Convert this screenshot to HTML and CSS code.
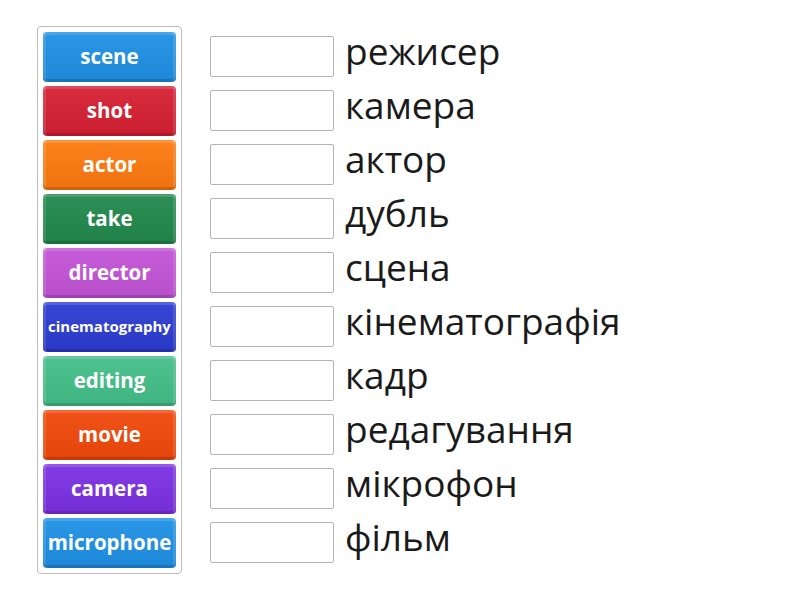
FILE: index.html
```html
<!DOCTYPE html>
<html>
<head>
<meta charset="utf-8">
<link rel="stylesheet" href="styles.css">
</head>
<body>
<div class="page">
  <div class="bank">
    <div class="tile c-blue">scene</div>
    <div class="tile c-red">shot</div>
    <div class="tile c-orange">actor</div>
    <div class="tile c-green">take</div>
    <div class="tile c-pink">director</div>
    <div class="tile c-indigo small">cinematography</div>
    <div class="tile c-mint">editing</div>
    <div class="tile c-vermilion">movie</div>
    <div class="tile c-purple">camera</div>
    <div class="tile c-blue">microphone</div>
  </div>
  <div class="rows">
    <div class="row"><div class="slot"></div><span class="word">режисер</span></div>
    <div class="row"><div class="slot"></div><span class="word">камера</span></div>
    <div class="row"><div class="slot"></div><span class="word">актор</span></div>
    <div class="row"><div class="slot"></div><span class="word">дубль</span></div>
    <div class="row"><div class="slot"></div><span class="word">сцена</span></div>
    <div class="row"><div class="slot"></div><span class="word">кінематографія</span></div>
    <div class="row"><div class="slot"></div><span class="word">кадр</span></div>
    <div class="row"><div class="slot"></div><span class="word">редагування</span></div>
    <div class="row"><div class="slot"></div><span class="word">мікрофон</span></div>
    <div class="row"><div class="slot"></div><span class="word">фільм</span></div>
  </div>
</div>
</body>
</html>
```

FILE: styles.css
```css
html, body {
  margin: 0;
  padding: 0;
  background: #ffffff;
  font-family: "Open Sans", "Noto Sans", sans-serif;
}
.page {
  display: flex;
  align-items: flex-start;
  padding: 26px 0 0 37px;
  gap: 28px;
}
.bank {
  display: flex;
  flex-direction: column;
  gap: 4px;
  padding: 5px;
  border: 1px solid #bdbdbd;
  border-radius: 4px;
}
.tile {
  width: 133px;
  height: 50px;
  box-sizing: border-box;
  padding-bottom: 2px;
  border-radius: 4px;
  display: flex;
  align-items: center;
  justify-content: center;
  color: #ffffff;
  font-weight: 700;
  font-size: 20.5px;
  white-space: nowrap;
  box-shadow:
    inset 0 -3px 0 rgba(0, 0, 0, 0.14),
    inset 3px 0 0 rgba(255, 255, 255, 0.12),
    inset -3px 0 0 rgba(255, 255, 255, 0.12),
    inset 0 3px 0 rgba(255, 255, 255, 0.14);
  background-image: linear-gradient(to bottom, rgba(255,255,255,0.06), rgba(0,0,0,0.06));
}
.tile.small { font-size: 15px; }
.c-blue { background-color: #1e90e4; }
.c-red { background-color: #d61f33; }
.c-orange { background-color: #fd7a10; }
.c-green { background-color: #21894c; }
.c-pink { background-color: #c353d6; }
.c-indigo { background-color: #2c3cd1; }
.c-mint { background-color: #43bf88; }
.c-vermilion { background-color: #f1480a; }
.c-purple { background-color: #7c30e2; }
.rows {
  display: flex;
  flex-direction: column;
  gap: 13px;
  padding-top: 10px;
}
.row {
  display: flex;
  align-items: flex-start;
  height: 41px;
  gap: 11px;
}
.slot {
  width: 124px;
  height: 41px;
  box-sizing: border-box;
  border: 1px solid #b3b3b3;
  border-radius: 2px;
  background: #ffffff;
}
.word {
  font-size: 37px;
  color: #1a1a1a;
  line-height: 29px;
  white-space: nowrap;
}
```
